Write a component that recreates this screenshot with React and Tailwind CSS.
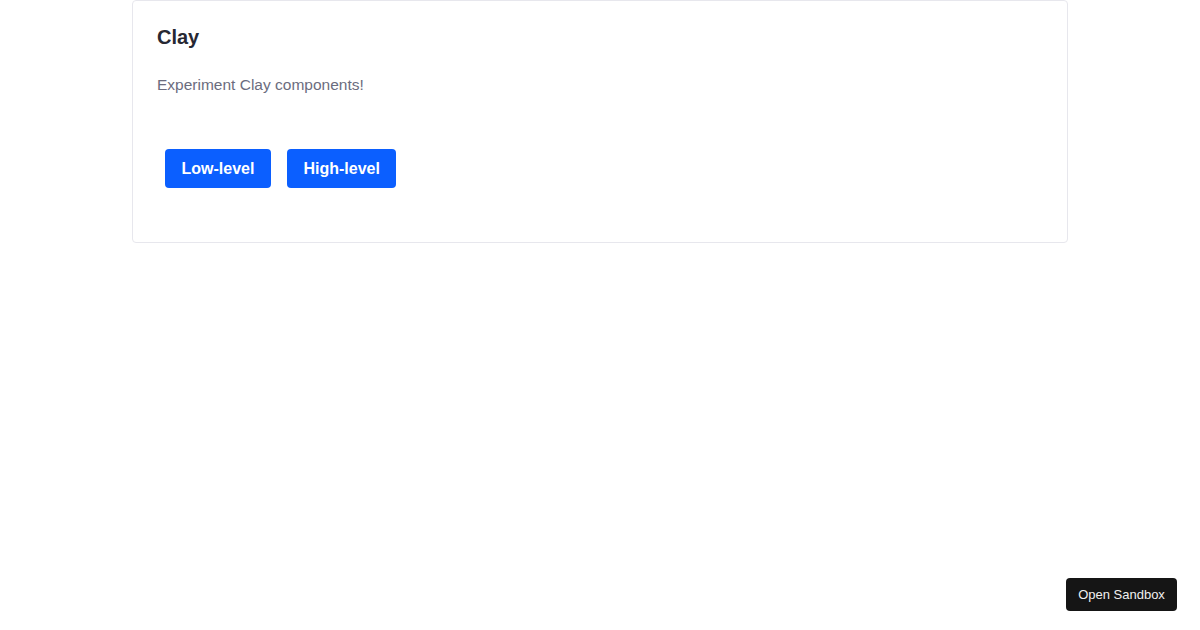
import React from 'react'

const Button = ({ children }) => (
  <button className="h-[39px] px-[16.5px] rounded-[4px] bg-[#0b5fff] text-white text-base font-bold leading-none">
    {children}
  </button>
)

export default function App() {
  return (
    <div className="w-[1200px] h-[630px] bg-white relative font-['Liberation_Sans',Arial,sans-serif]">
      <div className="w-[936px] ml-[132px] h-[243px] border border-[#e7e7ed] rounded-[4px] pt-[24px] px-[24px]">
        <h1 className="text-[20px] leading-[24px] font-bold text-[#272833]">Clay</h1>
        <p className="mt-[24px] text-[15.5px] leading-[24px] text-[#6b6c7e]">Experiment Clay components!</p>
        <div className="mt-[52px] ml-[8px] flex gap-4">
          <Button>Low-level</Button>
          <Button>High-level</Button>
        </div>
      </div>
      <button className="absolute left-[1066px] top-[578px] w-[111px] h-[33px] rounded-[4px] bg-[#151515] text-[#f0f0f0] text-[13px]">
        Open Sandbox
      </button>
    </div>
  )
}
